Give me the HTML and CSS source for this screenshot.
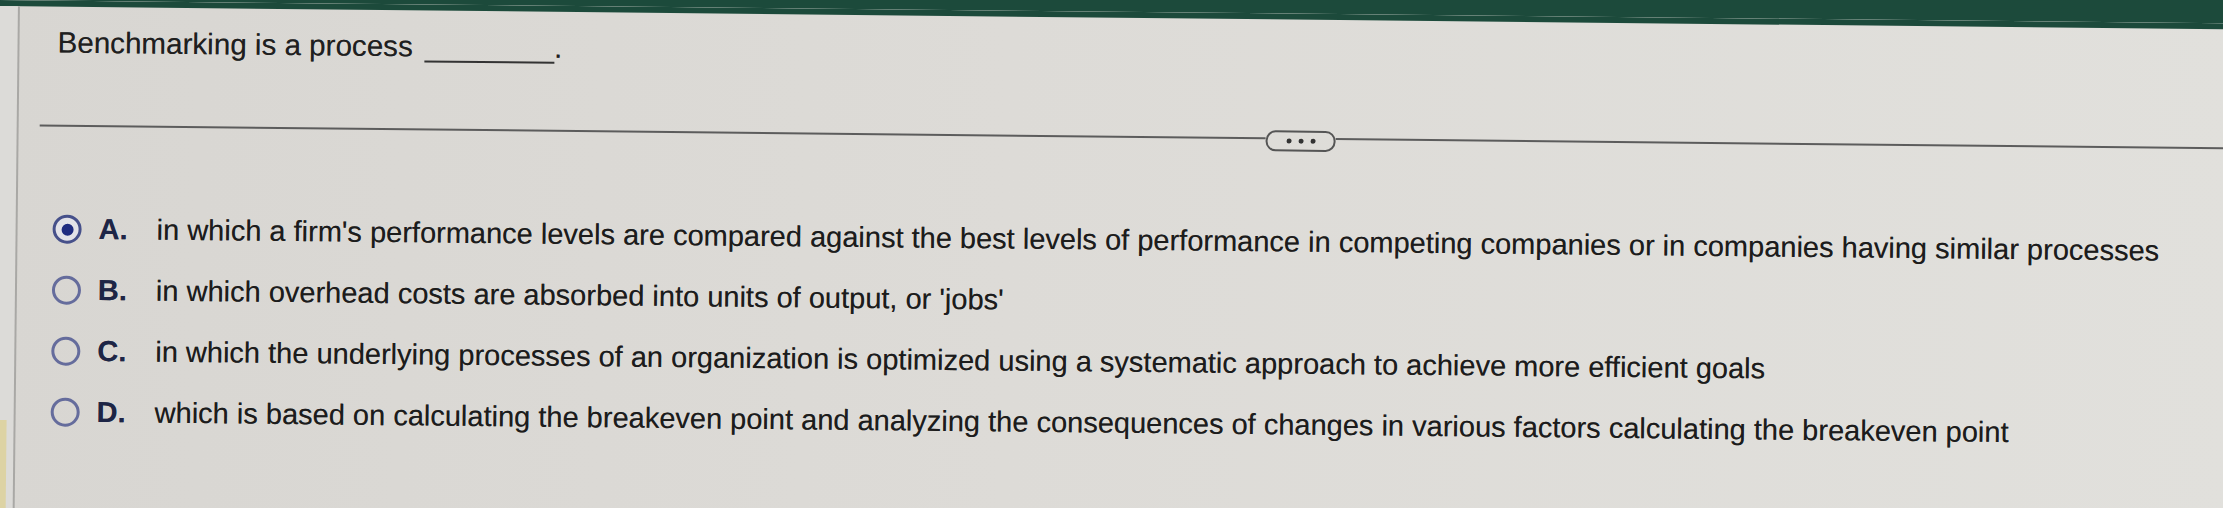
FILE: index.html
```html
<!DOCTYPE html>
<html lang="en">
<head>
<meta charset="utf-8">
<title>Benchmarking question</title>
<link rel="stylesheet" href="styles.css">
</head>
<body>
<div class="screen">
  <div class="topbar"></div>
  <div class="page">
    <div class="leftstrip"><div class="marker"></div></div>
    <main class="content">
      <p class="question">Benchmarking is a process <span class="blank"></span>.</p>
      <div class="divider">
        <span class="rule"></span>
        <button class="more" type="button" aria-label="more"><i></i><i></i><i></i></button>
        <span class="rule"></span>
      </div>
      <ul class="options">
        <li class="option"><span class="radio selected"></span><span class="letter">A.</span><span class="text">in which a firm's performance levels are compared against the best levels of performance in competing companies or in companies having similar processes</span></li>
        <li class="option"><span class="radio"></span><span class="letter">B.</span><span class="text">in which overhead costs are absorbed into units of output, or 'jobs'</span></li>
        <li class="option"><span class="radio"></span><span class="letter">C.</span><span class="text">in which the underlying processes of an organization is optimized using a systematic approach to achieve more efficient goals</span></li>
        <li class="option"><span class="radio"></span><span class="letter">D.</span><span class="text">which is based on calculating the breakeven point and analyzing the consequences of changes in various factors calculating the breakeven point</span></li>
      </ul>
    </main>
  </div>
</div>
</body>
</html>
```

FILE: styles.css
```css
html {
  background: #1c4a3b;
  overflow: hidden;
}
body {
  margin: 0;
  overflow: hidden;
  width: 2223px;
  height: 508px;
  font-family: "Liberation Sans", Arial, Helvetica, sans-serif;
}
.screen {
  width: 2240px;
  height: 512px;
  transform: rotate(0.6deg);
  transform-origin: 0 0;
  background: linear-gradient(90deg, #d8d6d2 0%, #dddbd7 45%, #e1e0dc 100%);
  display: flex;
  flex-direction: column;
  overflow: hidden;
}
.topbar {
  height: 6px;
  background: #1c4a3b;
  flex: none;
}
.page {
  display: flex;
  flex: 1;
}
.leftstrip {
  width: 20px;
  flex: none;
  border-right: 2px solid #a9a8a5;
  background: #dcdbd8;
  padding-top: 414px;
  box-sizing: border-box;
}
.marker {
  width: 11px;
  height: 92px;
  background: #ddd3a4;
}
.content {
  flex: 1;
  padding-left: 21px;
}
.question {
  margin: 20px 0 0 17px;
  font-size: 29.6px;
  line-height: 32px;
  color: #1f1f1f;
  text-shadow: 0 0 0.5px rgba(0, 0, 0, 0.5);
}
.blank {
  display: inline-block;
  width: 130px;
  margin-left: 3px;
  border-bottom: 2px solid #333;
  vertical-align: -6px;
}
.divider {
  display: flex;
  align-items: center;
  margin-top: 57px;
  height: 20px;
}
.rule {
  height: 2px;
  background: #5c5c5c;
  flex: none;
}
.rule:first-child {
  width: 1226px;
}
.rule:last-child {
  flex: 1;
}
.more {
  flex: none;
  width: 70px;
  height: 21px;
  box-sizing: border-box;
  border: 2px solid #555;
  border-radius: 10px;
  background: transparent;
  display: flex;
  align-items: center;
  justify-content: center;
  gap: 7px;
  padding: 0;
  margin-top: 4px;
}
.more i {
  width: 5px;
  height: 5px;
  border-radius: 50%;
  background: #333;
}
.options {
  list-style: none;
  margin: 63px 0 0 0;
  padding: 0 0 0 14px;
}
.option {
  display: flex;
  align-items: center;
  height: 61px;
  font-size: 29px;
  color: #1c1c1c;
  text-shadow: 0 0 0.5px rgba(0, 0, 0, 0.5);
}
.radio {
  flex: none;
  width: 29px;
  height: 29px;
  box-sizing: border-box;
  border-radius: 50%;
  border: 3px solid #656c9c;
  margin-right: 17px;
  display: flex;
  align-items: center;
  justify-content: center;
}
.radio.selected {
  border-color: #46508a;
  background: #e2e2e8;
}
.radio.selected::after {
  content: "";
  width: 12px;
  height: 12px;
  border-radius: 50%;
  background: #1f2c80;
}
.letter {
  flex: none;
  width: 58px;
  font-weight: bold;
  color: #1d2546;
}
.text {
  white-space: nowrap;
}
```
